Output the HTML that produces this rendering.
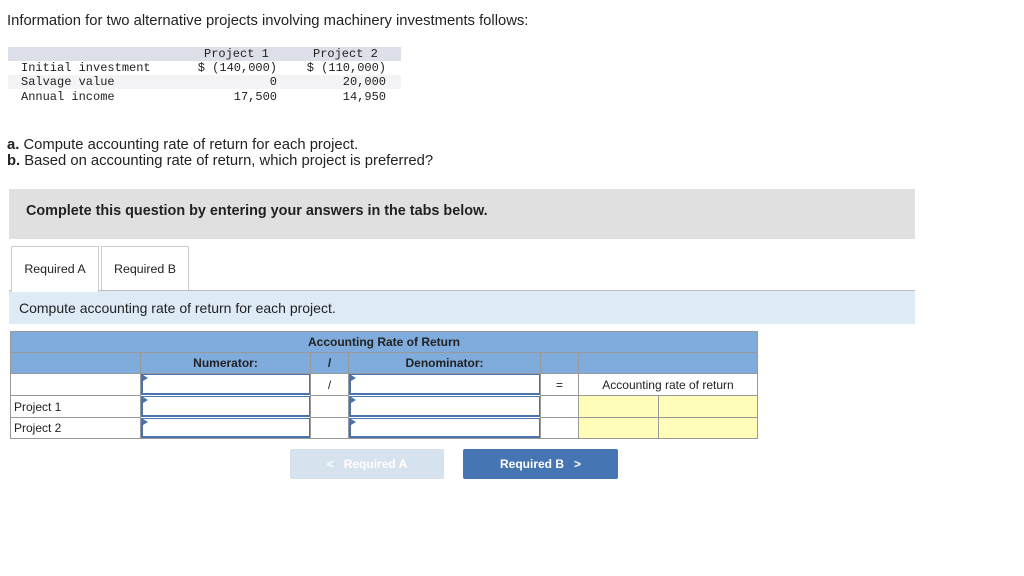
<!DOCTYPE html>
<html><head><style>
body{margin:0;width:1024px;height:576px;background:#fff;font-family:"Liberation Sans",Arial,sans-serif;position:relative;overflow:hidden;color:#222}
.a{position:absolute}
.mono{font-family:"Liberation Mono",monospace;font-size:12px;color:#222;white-space:pre}
.c{position:absolute;box-sizing:border-box;border:1px solid #999;font-size:12px;display:flex;align-items:center}
.in{position:absolute;box-sizing:border-box;background:#fff;border:2px solid #4a72ad;border-top-width:1px;border-right-width:1px}
.in:before{content:"";position:absolute;left:0;top:0;border-left:5px solid #4a72ad;border-top:3px solid transparent;border-bottom:3px solid transparent}
</style></head><body>
<div class="a" style="left:7px;top:13px;font-size:14.8px">Information for two alternative projects involving machinery investments follows:</div>
<div class="a" style="left:8px;top:47px;width:393px;height:14px;background:#dde0e8"></div>
<div class="a" style="left:8px;top:75px;width:393px;height:14px;background:#f4f4f6"></div>
<div class="a mono" style="left:204px;top:47px">Project 1</div>
<div class="a mono" style="left:313px;top:47px">Project 2</div>
<div class="a mono" style="left:21px;top:61px;line-height:14.3px">Initial investment
Salvage value
Annual income</div>
<div class="a mono" style="left:177px;top:61px;line-height:14.3px;text-align:right;width:100px">$ (140,000)
0
17,500</div>
<div class="a mono" style="left:283px;top:61px;line-height:14.3px;text-align:right;width:103px">$ (110,000)
20,000
14,950</div>
<div class="a" style="left:7px;top:137px;font-size:14.8px;line-height:16px"><b>a.</b> Compute accounting rate of return for each project.<br><b>b.</b> Based on accounting rate of return, which project is preferred?</div>
<div class="a" style="left:9px;top:189px;width:906px;height:50px;background:#e0e0e0"></div>
<div class="a" style="left:26px;top:203px;font-size:14.4px;font-weight:bold">Complete this question by entering your answers in the tabs below.</div>
<div class="a" style="left:11px;top:246px;width:86px;height:45px;border:1px solid #ccc;border-bottom:none;background:#fff;font-size:12.4px;text-align:center;line-height:45px;z-index:2">Required A</div>
<div class="a" style="left:101px;top:246px;width:86px;height:43px;border:1px solid #ccc;background:#fff;font-size:12.4px;text-align:center;line-height:45px">Required B</div>
<div class="a" style="left:9px;top:290px;width:906px;height:1px;background:#bbb"></div>
<div class="a" style="left:9px;top:291px;width:906px;height:33px;background:#deeaf6"></div>
<div class="a" style="left:19px;top:300px;font-size:14px">Compute accounting rate of return for each project.</div>

<div class="c" style="left:10px;top:331px;width:748px;height:22px;background:#7fabdd;justify-content:center;font-weight:bold">Accounting Rate of Return</div>
<div class="c" style="left:10px;top:352px;width:131px;height:22px;background:#7fabdd"></div>
<div class="c" style="left:140px;top:352px;width:171px;height:22px;background:#7fabdd;justify-content:center;font-weight:bold">Numerator:</div>
<div class="c" style="left:310px;top:352px;width:39px;height:22px;background:#7fabdd;justify-content:center;font-weight:bold">/</div>
<div class="c" style="left:348px;top:352px;width:193px;height:22px;background:#7fabdd;justify-content:center;font-weight:bold">Denominator:</div>
<div class="c" style="left:540px;top:352px;width:39px;height:22px;background:#7fabdd"></div>
<div class="c" style="left:578px;top:352px;width:180px;height:22px;background:#7fabdd"></div>

<div class="c" style="left:10px;top:373px;width:131px;height:23px"></div>
<div class="c" style="left:10px;top:395px;width:131px;height:23px;padding-left:3px">Project 1</div>
<div class="c" style="left:10px;top:417px;width:131px;height:22px;padding-left:3px">Project 2</div>
<div class="c" style="left:140px;top:373px;width:171px;height:66px"></div>
<div class="c" style="left:310px;top:373px;width:39px;height:23px;justify-content:center">/</div>
<div class="c" style="left:310px;top:395px;width:39px;height:23px"></div>
<div class="c" style="left:310px;top:417px;width:39px;height:22px"></div>
<div class="c" style="left:348px;top:373px;width:193px;height:66px"></div>
<div class="c" style="left:540px;top:373px;width:39px;height:23px;justify-content:center">=</div>
<div class="c" style="left:540px;top:395px;width:39px;height:23px"></div>
<div class="c" style="left:540px;top:417px;width:39px;height:22px"></div>
<div class="c" style="left:578px;top:373px;width:180px;height:23px;justify-content:center">Accounting rate of return</div>
<div class="c" style="left:578px;top:395px;width:81px;height:23px;background:#fffdb8"></div>
<div class="c" style="left:658px;top:395px;width:100px;height:23px;background:#fffdb8"></div>
<div class="c" style="left:578px;top:417px;width:81px;height:22px;background:#fffdb8"></div>
<div class="c" style="left:658px;top:417px;width:100px;height:22px;background:#fffdb8"></div>

<div class="in" style="left:141px;top:374px;width:169px;height:21px"></div>
<div class="in" style="left:141px;top:396px;width:169px;height:21px"></div>
<div class="in" style="left:141px;top:418px;width:169px;height:20px"></div>
<div class="in" style="left:349px;top:374px;width:191px;height:21px"></div>
<div class="in" style="left:349px;top:396px;width:191px;height:21px"></div>
<div class="in" style="left:349px;top:418px;width:191px;height:20px"></div>

<div class="a" style="left:290px;top:449px;width:154px;height:30px;background:#d7e2ef;border-radius:2px;color:#fff;font-size:12px;font-weight:bold;text-align:center;line-height:30px">&lt;&nbsp;&nbsp; Required A</div>
<div class="a" style="left:463px;top:449px;width:155px;height:30px;background:#4675b3;border-radius:2px;color:#fff;font-size:12px;font-weight:bold;text-align:center;line-height:30px">Required B &nbsp;&nbsp;&gt;</div>
</body></html>
